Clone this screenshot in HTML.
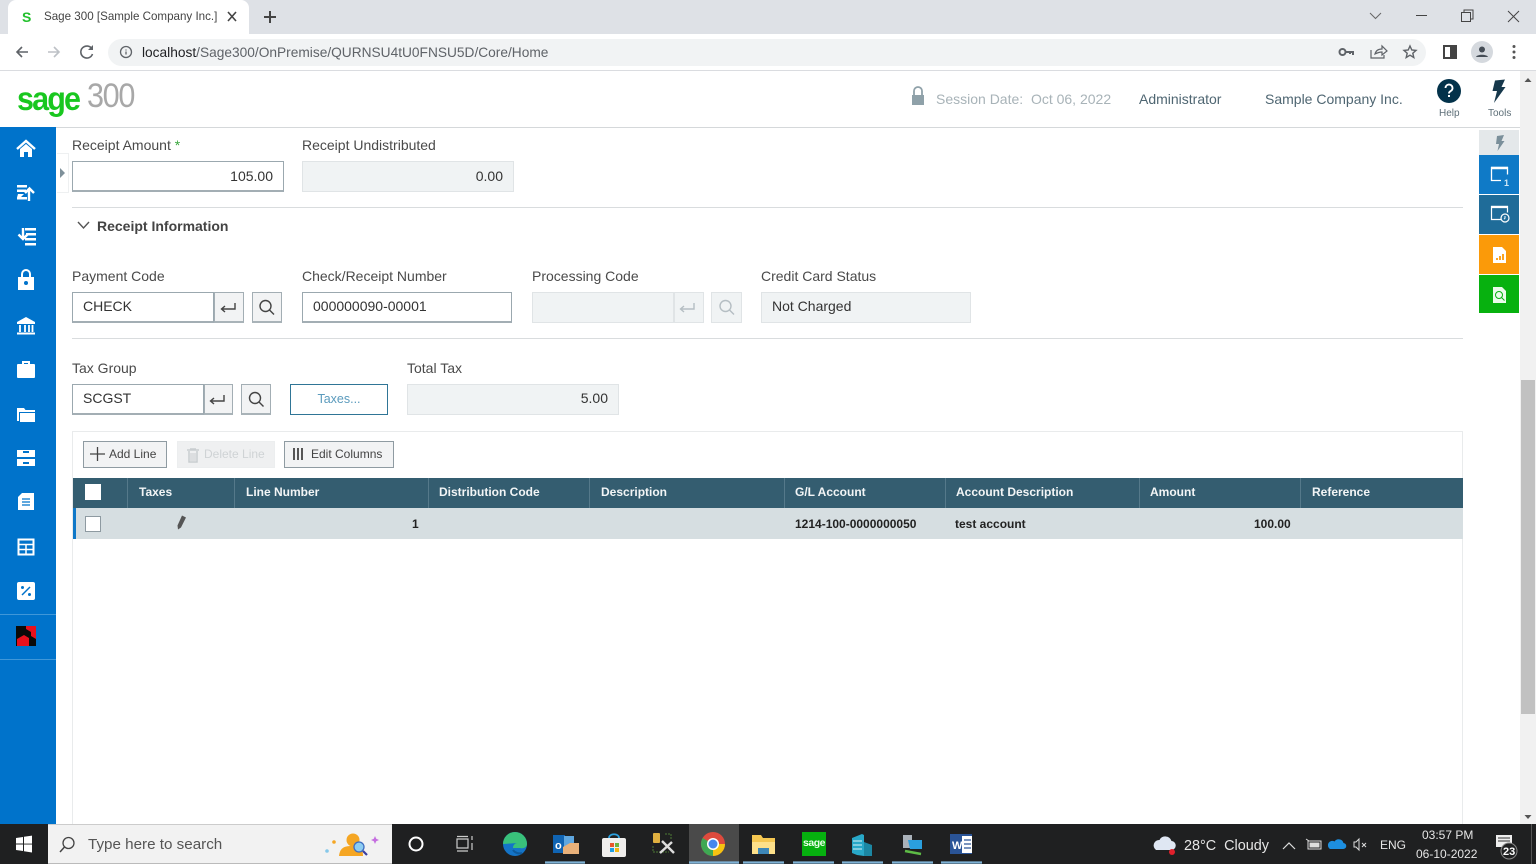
<!DOCTYPE html>
<html><head><meta charset="utf-8"><title>Sage 300</title>
<style>
*{box-sizing:border-box}
html,body{margin:0;padding:0;width:1536px;height:864px;overflow:hidden;background:#fff;font-family:"Liberation Sans",sans-serif}
.a{position:absolute}
.t{position:absolute;white-space:nowrap;line-height:18px;color:#4a4a4a;font-size:14px}
.in{position:absolute;height:31px;background:#fff;border:1px solid #9ba8af;border-bottom:2px solid #a3aeb4;font-size:14px;line-height:27px;color:#333;padding:0 10px;white-space:nowrap}
.dis{background:#f0f3f4;border:1px solid #e0e4e6}
.r{text-align:right}
.btn{position:absolute;height:31px;background:#f2f3f4;border:1px solid #a3aeb4;border-bottom:2px solid #a9b3b8}
.hd{position:absolute;top:478px;height:30px;line-height:29px;color:#f2f5f6;font-size:12px;font-weight:bold;white-space:nowrap}
.cell{position:absolute;top:514px;line-height:18px;color:#222;font-size:12px;font-weight:bold;white-space:nowrap}
.tb{position:absolute;height:27px;background:#f2f3f4;border:1px solid #8f9ba2;font-size:12px;line-height:25px;color:#444;white-space:nowrap}
svg{position:absolute;left:0;top:0}
</style></head><body>

<!-- browser chrome -->
<div class="a" style="left:0;top:0;width:1536px;height:34px;background:#dee1e6"></div>
<div class="a" style="left:8px;top:0;width:241px;height:34px;background:#fff;border-radius:8px 8px 0 0"></div>
<div class="a" style="left:0;top:34px;width:1536px;height:36px;background:#fff"></div>
<div class="a" style="left:108px;top:39px;width:1318px;height:27px;background:#f1f3f4;border-radius:14px"></div>
<div class="a" style="left:0;top:70px;width:1536px;height:1px;background:#dadce0"></div>
<div class="t" style="left:22px;top:8px;color:#22c02c;font-weight:bold;font-size:14px">S</div>
<div class="t" style="left:44px;top:8px;font-size:11.6px;color:#444">Sage 300 [Sample Company Inc.]</div>
<div class="t" style="left:142px;top:44px;font-size:13.72px;color:#5f6368"><span style="color:#202124">localhost</span>/Sage300/OnPremise/QURNSU4tU0FNSU5D/Core/Home</div>

<!-- app header -->
<div class="t" style="left:17px;top:80px;font-size:33px;line-height:38px;font-weight:bold;color:#19c71f;letter-spacing:-2px;transform:scaleX(.925);transform-origin:left">sage</div>
<div class="t" style="left:87px;top:76px;font-size:34px;line-height:40px;color:#a8a8a8;letter-spacing:-1.5px;transform:scaleX(.9);transform-origin:left">300</div>
<div class="t" style="left:936px;top:90px;color:#a8b3b8">Session Date:&nbsp; Oct 06, 2022</div>
<div class="t" style="left:1139px;top:90px;color:#4f6672">Administrator</div>
<div class="t" style="left:1265px;top:90px;color:#4f6672">Sample Company Inc.</div>
<div class="t" style="left:1439px;top:105px;font-size:10px;color:#5d6e77">Help</div>
<div class="t" style="left:1488px;top:105px;font-size:10px;color:#5d6e77">Tools</div>
<div class="a" style="left:0;top:127px;width:1520px;height:1px;background:#d5d8da"></div>

<!-- sidebar -->
<div class="a" style="left:0;top:127px;width:56px;height:697px;background:#0073cb"></div>
<div class="a" style="left:0;top:614px;width:56px;height:1px;background:#3f97d9"></div>
<div class="a" style="left:0;top:659px;width:56px;height:1px;background:#3f97d9"></div>
<div class="a" style="left:16px;top:626px;width:20px;height:20px;background:#0a0a0a"></div>
<svg width="1536" height="864" viewBox="0 0 1536 864" fill="none" style="z-index:1"><path d="M26 626h10v13l-5-3v-4l-5-3zM17 639l7-4 5 3v8H17z" fill="#e8101c"/><path d="M29 640h7v6h-7z" fill="#0a0a0a"/></svg>

<!-- right rail -->
<div class="a" style="left:1520px;top:71px;width:16px;height:753px;background:#f1f1f1"></div>
<div class="a" style="left:1521px;top:380px;width:14px;height:334px;background:#c1c1c1"></div>
<div class="a" style="left:1479px;top:130px;width:40px;height:25px;background:#e4e8ea"></div>
<div class="a" style="left:1479px;top:155px;width:40px;height:39px;background:#0f7ac7"></div>
<div class="a" style="left:1479px;top:195px;width:40px;height:39px;background:#1f6c99"></div>
<div class="a" style="left:1479px;top:235px;width:40px;height:39px;background:#fb9a09"></div>
<div class="a" style="left:1479px;top:275px;width:40px;height:38px;background:#07b10f"></div>

<!-- form row 1 -->
<div class="a" style="left:57px;top:153px;width:12px;height:40px;background:#fff;border:1px solid #eef0f1;border-left:0"></div>
<div class="t" style="left:72px;top:136px">Receipt Amount <span style="color:#3aa83f">*</span></div>
<div class="in r" style="left:72px;top:161px;width:212px;line-height:28px">105.00</div>
<div class="t" style="left:302px;top:136px">Receipt Undistributed</div>
<div class="in r dis" style="left:302px;top:161px;width:212px;line-height:28px">0.00</div>
<div class="a" style="left:72px;top:207px;width:1391px;height:1px;background:#d9dcde"></div>
<div class="t" style="left:97px;top:217px;font-weight:bold;color:#444">Receipt Information</div>

<!-- form row 2 -->
<div class="t" style="left:72px;top:267px">Payment Code</div>
<div class="in" style="left:72px;top:292px;width:142px">CHECK</div>
<div class="btn" style="left:214px;top:292px;width:30px"></div>
<div class="btn" style="left:252px;top:292px;width:30px"></div>
<div class="t" style="left:302px;top:267px">Check/Receipt Number</div>
<div class="in" style="left:302px;top:292px;width:210px">000000090-00001</div>
<div class="t" style="left:532px;top:267px">Processing Code</div>
<div class="in dis" style="left:532px;top:292px;width:142px"></div>
<div class="in dis" style="left:674px;top:292px;width:30px"></div>
<div class="in dis" style="left:711px;top:292px;width:31px"></div>
<div class="t" style="left:761px;top:267px">Credit Card Status</div>
<div class="in dis" style="left:761px;top:292px;width:210px;color:#333">Not Charged</div>
<div class="a" style="left:72px;top:338px;width:1391px;height:1px;background:#d9dcde"></div>

<!-- form row 3 -->
<div class="t" style="left:72px;top:359px">Tax Group</div>
<div class="in" style="left:72px;top:384px;width:132px">SCGST</div>
<div class="btn" style="left:204px;top:384px;width:29px"></div>
<div class="btn" style="left:241px;top:384px;width:30px"></div>
<div class="a" style="left:290px;top:384px;width:98px;height:31px;background:#fff;border:1px solid #2f7596;color:#5b9bbd;font-size:12.5px;line-height:29px;text-align:center">Taxes...</div>
<div class="t" style="left:407px;top:359px">Total Tax</div>
<div class="in r dis" style="left:407px;top:384px;width:212px">5.00</div>

<!-- grid panel -->
<div class="a" style="left:72px;top:431px;width:1391px;height:393px;border:1px solid #e9ebec;border-bottom:0"></div>
<div class="tb" style="left:83px;top:441px;width:84px;padding-left:25px">Add Line</div>
<div class="tb" style="left:177px;top:441px;width:98px;padding-left:26px;border-color:#eceeef;background:#eff0f1;color:#cfd3d5">Delete Line</div>
<div class="tb" style="left:284px;top:441px;width:110px;padding-left:26px">Edit Columns</div>

<div class="a" style="left:73px;top:478px;width:1390px;height:30px;background:#345d70"></div>
<div class="a" style="left:73px;top:508px;width:1390px;height:31px;background:#d6dee1"></div>
<div class="a" style="left:73px;top:508px;width:3px;height:31px;background:#0f78c8"></div>
<div class="a" style="left:85px;top:484px;width:16px;height:16px;background:#fff"></div>
<div class="a" style="left:85px;top:516px;width:16px;height:16px;background:#fff;border:1px solid #8e9aa1"></div>
<div class="hd" style="left:139px">Taxes</div>
<div class="hd" style="left:246px">Line Number</div>
<div class="hd" style="left:439px">Distribution Code</div>
<div class="hd" style="left:601px">Description</div>
<div class="hd" style="left:795px">G/L Account</div>
<div class="hd" style="left:956px">Account Description</div>
<div class="hd" style="left:1150px">Amount</div>
<div class="hd" style="left:1312px">Reference</div>
<div class="a" style="left:127px;top:478px;width:1px;height:30px;background:#55798a"></div>
<div class="a" style="left:234px;top:478px;width:1px;height:30px;background:#55798a"></div>
<div class="a" style="left:428px;top:478px;width:1px;height:30px;background:#55798a"></div>
<div class="a" style="left:589px;top:478px;width:1px;height:30px;background:#55798a"></div>
<div class="a" style="left:784px;top:478px;width:1px;height:30px;background:#55798a"></div>
<div class="a" style="left:945px;top:478px;width:1px;height:30px;background:#55798a"></div>
<div class="a" style="left:1139px;top:478px;width:1px;height:30px;background:#55798a"></div>
<div class="a" style="left:1300px;top:478px;width:1px;height:30px;background:#55798a"></div>
<div class="cell" style="left:412px;top:515px">1</div>
<div class="cell" style="left:795px;top:515px">1214-100-0000000050</div>
<div class="cell" style="left:955px;top:515px">test account</div>
<div class="cell" style="left:1254px;top:515px">100.00</div>

<!-- taskbar -->
<div class="a" style="left:0;top:824px;width:1536px;height:40px;background:#1f2021"></div>
<div class="a" style="left:48px;top:824px;width:344px;height:40px;background:#f2f2f2;border-top:1px solid #ccc;border-bottom:1px solid #bbb"></div>
<div class="a" style="left:689px;top:824px;width:50px;height:40px;background:#4a4a4a"></div>
<div class="t" style="left:88px;top:836px;font-size:15.2px;color:#555">Type here to search</div>
<div class="a" style="left:802px;top:832px;width:24px;height:24px;background:#06b00f;color:#e8ffe8;font-size:10.5px;font-weight:bold;line-height:23px;text-align:center;letter-spacing:-.5px">sage</div>
<div class="t" style="left:1184px;top:837px;font-size:14.4px;color:#e6e6e6">28°C&nbsp; Cloudy</div>
<div class="t" style="left:1380px;top:836px;font-size:12px;color:#e6e6e6">ENG</div>
<div class="t" style="left:1422px;top:826px;font-size:12px;color:#e6e6e6">03:57 PM</div>
<div class="t" style="left:1416px;top:845px;font-size:12px;color:#e6e6e6">06-10-2022</div>

<svg width="1536" height="864" viewBox="0 0 1536 864" fill="none">
 <!-- tab -->
 <path d="M228 12l8 9M236 12l-8 9" stroke="#444" stroke-width="1.6"/>
 <path d="M270 11v12M264 17h12" stroke="#444" stroke-width="2"/>
 <path d="M1370 13l5.500 5.500 5.500-5.500" stroke="#666" stroke-width="1"/>
 <path d="M1416 15.500h11" stroke="#444"/>
 <rect x="1461.500" y="12.500" width="9" height="9" stroke="#444"/><path d="M1464 12v-2h9v9h-2" stroke="#444"/>
 <path d="M1508 11l11 11M1519 11l-11 11" stroke="#444"/>
 <!-- nav -->
 <path d="M28 52H17M22 47l-5 5 5 5" stroke="#5f6368" stroke-width="1.600"/>
 <path d="M48 52h11M54 47l5 5-5 5" stroke="#bdc1c6" stroke-width="1.600"/>
 <path d="M92 49a6 6 0 1 0 .5 5" stroke="#5f6368" stroke-width="1.600"/><path d="M93 45v5h-5z" fill="#5f6368"/>
 <circle cx="126" cy="52" r="5.500" stroke="#5f6368" stroke-width="1.300"/><path d="M126 49.500v1M126 51.500v3" stroke="#5f6368" stroke-width="1.300"/>
 <circle cx="1342.500" cy="52" r="3" stroke="#5f6368" stroke-width="2"/><path d="M1345 52h8v3M1350 52v2" stroke="#5f6368" stroke-width="2"/>
 <path d="M1371 50v8h13v-3M1375 54c1-4 4-5 7-5v-3l5 5-5 4v-3c-3 0-5 1-7 2z" stroke="#5f6368" stroke-width="1.200"/>
 <path d="M1410 46l1.800 4 4.200.4-3.200 2.800 1 4.300-3.800-2.300-3.800 2.300 1-4.300-3.200-2.800 4.200-.4z" stroke="#5f6368" stroke-width="1.400"/>
 <rect x="1444" y="46" width="12" height="12" stroke="#444" stroke-width="2"/><rect x="1450" y="46" width="6" height="12" fill="#444"/>
 <circle cx="1482" cy="52" r="11" fill="#d5d9de"/><circle cx="1482" cy="49.500" r="3" fill="#444c55"/><path d="M1476 57c1-3 11-3 12 0z" fill="#444c55"/>
 <circle cx="1514" cy="46.500" r="1.500" fill="#555"/><circle cx="1514" cy="52" r="1.500" fill="#555"/><circle cx="1514" cy="57.500" r="1.500" fill="#555"/>
 <!-- header icons -->
 <path d="M914 95v-4a4 4 0 0 1 8 0v4" stroke="#8fa1a9" stroke-width="1.800"/><rect x="912" y="95" width="12" height="10" fill="#8fa1a9"/>
 <circle cx="1449" cy="91" r="12" fill="#03324a"/>
 <path d="M1445.500 88a3.500 3.500 0 1 1 5 3.200c-1 .6-1.500 1.100-1.500 2.300" stroke="#fff" stroke-width="1.900"/><rect x="1448" y="95" width="2" height="2" fill="#fff"/>
 <path d="M1495 80.500l10-1-3.500 7.500h4L1494 103l3-12h-4.500z" fill="#16384c"/>
 <path d="M1528 78l3.500 4h-7z" fill="#555"/><path d="M1528 819l3.500-4h-7z" fill="#555"/>
 <!-- rail icons -->
 <path d="M1497 136l7-1-2.500 6h3l-7 10 1.500-7h-3z" fill="#7a8f9a"/>
 <path d="M1501 180.500h-9.500v-13h16v7" stroke="#fff" stroke-width="1.300"/><path d="M1491 168h17" stroke="#fff" stroke-width="2.400"/>
 <text x="1504" y="186" fill="#cfe8f7" font-family="Liberation Sans" font-size="9" font-weight="bold">1</text>
 <path d="M1501 219.500h-9.500v-13h16v6" stroke="#fff" stroke-width="1.200"/><path d="M1491 207h17" stroke="#fff" stroke-width="2.200"/><circle cx="1505" cy="218" r="4" stroke="#fff" stroke-width="1.200"/><path d="M1505 216v2.200l-1 1" stroke="#fff"/>
 <path d="M1493 247h9l4 4v12h-13z" fill="#fff"/><path d="M1497 260v-2M1500 260v-4M1503 260v-6" stroke="#fb9a09" stroke-width="1.800"/>
 <path d="M1493 287h9l4 4v12h-13z" fill="#eafbea"/><circle cx="1499" cy="295" r="3.500" stroke="#07b10f"/><path d="M1501.500 297.500l3 3" stroke="#07b10f"/>
 <!-- sidebar icons -->
 <path d="M17 149l9-8 9 8" stroke="#fff" stroke-width="2.400"/><path d="M20 149l6-5 6 5v8h-4v-5h-4v5h-4z" fill="#fff"/>
 <path d="M17 185h10v2.500H17zM17 189.500h9V192h-9zM18 194h6l-3 3h6v2.500H17v-2zM17 199z" fill="#fff"/><path d="M29 201v-11M25 193l4.500-4.500 4.500 4.500" stroke="#fff" stroke-width="2.400"/>
 <path d="M25 228h11v2.500H25zM26 233h10v2.500H26zM25 238h11v2.500H25zM25 243h11v2.500H25z" fill="#fff"/><path d="M23 228v11M18.500 234.500l4.500 4.500 4.500-4.500" stroke="#fff" stroke-width="2.400"/>
 <path d="M22 277v-3a4 4 0 0 1 8 0v3" stroke="#fff" stroke-width="2"/><path d="M18 277h16v13H18z" fill="#fff"/><circle cx="26" cy="283" r="2" fill="#0073cb"/>
 <path d="M26 317l9 5v2H17v-2z" fill="#fff"/><path d="M20 325v7M25 325v7M29 325v7M32.500 325v7" stroke="#fff" stroke-width="1.800"/><path d="M17 333.500h18" stroke="#fff" stroke-width="2"/>
 <path d="M23 365v-3h6v3" stroke="#fff" stroke-width="2"/><rect x="17" y="364" width="18" height="14" rx="1" fill="#fff"/>
 <path d="M17 408h7l1.500 2H35v2H19v9h-2z" fill="#fff"/><path d="M20 413h15v9H20z" fill="#fff"/>
 <rect x="17" y="450" width="18" height="7" fill="#fff"/><rect x="17" y="459" width="18" height="7" fill="#fff"/><path d="M23 452h6M23 463h6" stroke="#0073cb" stroke-width="2"/>
 <path d="M22 493h12v17H18v-13z" fill="#fff"/><path d="M22 499h8M22 502h8M22 505h8" stroke="#0073cb" stroke-width="1.300"/>
 <rect x="18.500" y="539.500" width="15" height="15" stroke="#fff" stroke-width="2"/><path d="M18 544.500h16M26 545v9M19 549.500h14" stroke="#fff" stroke-width="1.500"/>
 <rect x="17" y="582" width="18" height="18" rx="2" fill="#fff"/><path d="M22 595l8-8" stroke="#0073cb" stroke-width="1.500"/><circle cx="22.500" cy="587.500" r="1.500" fill="#0073cb"/><circle cx="29.500" cy="594.500" r="1.500" fill="#0073cb"/>
 <!-- form icons -->
 <path d="M60 168v10l5-5z" fill="#7e909a"/>
 <path d="M78 222l5.500 6 5.500-6" stroke="#555" stroke-width="1.400"/>
 <g stroke="#444" stroke-width="1.400"><path d="M235 303v6h-13M225 306l-3.500 3 3.500 3" /><circle cx="265.500" cy="306" r="5.500"/><path d="M269.500 310l4.500 4.500"/></g>
 <g stroke="#b5bec3" stroke-width="1.400"><path d="M694 303v6h-13M684 306l-3.500 3 3.500 3"/><circle cx="725.500" cy="306" r="5.500"/><path d="M729.500 310l4.500 4.500"/></g>
 <g stroke="#444" stroke-width="1.400"><path d="M224 395v6h-13M214 398l-3.500 3 3.500 3"/><circle cx="255" cy="398" r="5.500"/><path d="M259 402l4.500 4.500"/></g>
 <!-- toolbar icons -->
 <path d="M97.500 447v14M90 454h15" stroke="#444" stroke-width="1.300"/>
 <path d="M187 450h12M190 449h6M189 451v11h8v-11" stroke="#c9cdd0" stroke-width="1.500"/><path d="M191 453v8M193 453v8M195 453v8" stroke="#c9cdd0"/>
 <path d="M294 448v12M298 448v12M302 448v12" stroke="#444" stroke-width="1.800"/>
 <path d="M182 515.500l4 2-5 10-3 2-.5-4z" fill="#555"/>
 <!-- taskbar icons -->
 <path d="M16 838l7-1v6.500h-7zM24 836.800l8-1.200v8h-8zM16 844.500h7v6.500l-7-1zM24 844.500h8v8l-8-1.200z" fill="#fff"/>
 <circle cx="68.500" cy="843" r="5.500" stroke="#444" stroke-width="1.300"/><path d="M64.500 847l-4.500 5" stroke="#444" stroke-width="1.500"/>
 <circle cx="353" cy="840" r="6.500" fill="#f5a623"/><path d="M339 856c1-9 6-10 14-10 7 0 10 3 10 10z" fill="#f5a623"/>
 <circle cx="359" cy="847" r="5" fill="#8dcdf2" stroke="#3f6dc0" stroke-width="1.300"/><path d="M363 851l4 4" stroke="#3b3fa0" stroke-width="2.200"/>
 <circle cx="334" cy="842" r="1.800" fill="#f5a623"/><circle cx="327" cy="851" r="1.800" fill="#86c8ea"/><path d="M375 836l1.200 2.800 2.800 1.200-2.800 1.200-1.200 2.800-1.200-2.800-2.800-1.200 2.800-1.200z" fill="#c56ee0"/>
 <circle cx="416" cy="844" r="6.500" stroke="#fff" stroke-width="2"/>
 <path d="M457 839h11v9h-11zM457 836.500h11M457 851h11M472 836v4M472 843v7" stroke="#ccc" stroke-width="1.200"/>
 <!-- edge -->
 <circle cx="515" cy="844" r="12" fill="#1474c7"/><path d="M503 844a12 12 0 0 1 24 0c0 3-3 5-7 4h-7c0-3 2-5 5-5" fill="#39c17a"/><path d="M513 850c2 3 6 4 9 3" stroke="#0e5a9c" stroke-width="2"/>
 <!-- outlook -->
 <rect x="553" y="835" width="12" height="18" fill="#1064b3"/><rect x="564" y="836" width="10" height="11" fill="#5fa7e0"/><path d="M563 847l7-4 9 0v11h-16z" fill="#e9b17a"/><text x="555" y="849" fill="#fff" font-family="Liberation Sans" font-size="11" font-weight="bold">o</text>
 <!-- store -->
 <rect x="602" y="838" width="24" height="19" rx="2" fill="#efeeec"/><path d="M609 838c0-5 10-5 10 0" stroke="#2ba1e0" stroke-width="1.800"/><rect x="610" y="843" width="4" height="4" fill="#e8562b"/><rect x="615" y="843" width="4" height="4" fill="#6cb33f"/><rect x="610" y="848" width="4" height="4" fill="#1f9fe3"/><rect x="615" y="848" width="4" height="4" fill="#f3b611"/>
 <!-- tools -->
 <rect x="653" y="833" width="7" height="10" rx="1" fill="#e0b040"/><path d="M653 846v6h16M665 834h6v6" stroke="#4d7a35" stroke-dasharray="2 1"/><path d="M660 853l12-11M662 841l12 12" stroke="#ddd" stroke-width="2.400"/>
 <!-- chrome -->
 <circle cx="713" cy="844" r="12" fill="#dd4a3d"/><path d="M713 844l-10.400-6A12 12 0 0 0 713 856z" fill="#3ea853"/><path d="M713 844h12a12 12 0 0 1-12 12z" fill="#f6c311"/><circle cx="713" cy="844" r="6" fill="#fff"/><circle cx="713" cy="844" r="4.500" fill="#4786ee"/>
 <!-- folder -->
 <path d="M752 835h9l2 3h12v16h-23z" fill="#f5c751"/><path d="M752 842h23v12h-23z" fill="#fde08a"/><rect x="758" y="848" width="11" height="6" fill="#3d87b8"/>
 <!-- building -->
 <path d="M852 838l10-4 2 1v21l-7-1-5-2z" fill="#28a8c8"/><path d="M864 842l8 3v11h-8z" fill="#1c87a3"/><path d="M853 841h9M853 845h9M853 849h9" stroke="#d6f2f8"/>
 <!-- network -->
 <rect x="903" y="835" width="9" height="13" fill="#aab2ba"/><path d="M908 840l14 0 0 9-12 0z" fill="#2a9fde"/><path d="M905 851l16 3" stroke="#5dbb46" stroke-width="2.500"/>
 <!-- word -->
 <rect x="950" y="834" width="22" height="20" fill="#2a5497"/><rect x="962" y="836" width="10" height="17" fill="#fff"/><path d="M964 840h7M964 844h7M964 848h7" stroke="#2a5497" stroke-width="1.300"/><text x="952" y="849" fill="#fff" font-family="Liberation Sans" font-size="11" font-weight="bold">W</text>
 <!-- underline indicators -->
 <path d="M545 862.500h40M689 862.500h50M743 862.500h41M793 862.500h41M842 862.500h41M892 862.500h41M941 862.500h41" stroke="#7fb2d6" stroke-width="2.200"/>
 <!-- tray -->
 <path d="M1156 850h15a4.500 4.500 0 0 0 .5-9 6.500 6.500 0 0 0-12-1 5.500 5.500 0 0 0-3.500 10z" fill="#dfe7f3"/><circle cx="1172" cy="852" r="3" fill="#e0202c"/>
 <path d="M1283 849l6-6 6 6" stroke="#ddd" stroke-width="1.200"/>
 <rect x="1308" y="841" width="13" height="8" stroke="#ddd"/><rect x="1309.500" y="842.500" width="10" height="5" fill="#ddd"/><path d="M1306 839l3 2" stroke="#ddd"/>
 <path d="M1330 849h13a3 3 0 0 0 .5-6 5 5 0 0 0-9-1.500 4 4 0 0 0-4.500 7.500z" fill="#1d8fe0"/>
 <path d="M1354 842h2l3-3v11l-3-3h-2zM1362 843l4 4M1366 843l-4 4" stroke="#ddd"/>
 <path d="M1496 835h16v12h-16z" fill="#eee"/><path d="M1498 838h12M1498 841h12" stroke="#333"/>
 <circle cx="1509" cy="851" r="8" fill="#1f2021" stroke="#888"/>
 <path d="M1531.500 824v40" stroke="#555"/>
</svg>
<div class="t" style="left:1503px;top:843px;font-size:11px;font-weight:bold;color:#fff">23</div>
</body></html>
